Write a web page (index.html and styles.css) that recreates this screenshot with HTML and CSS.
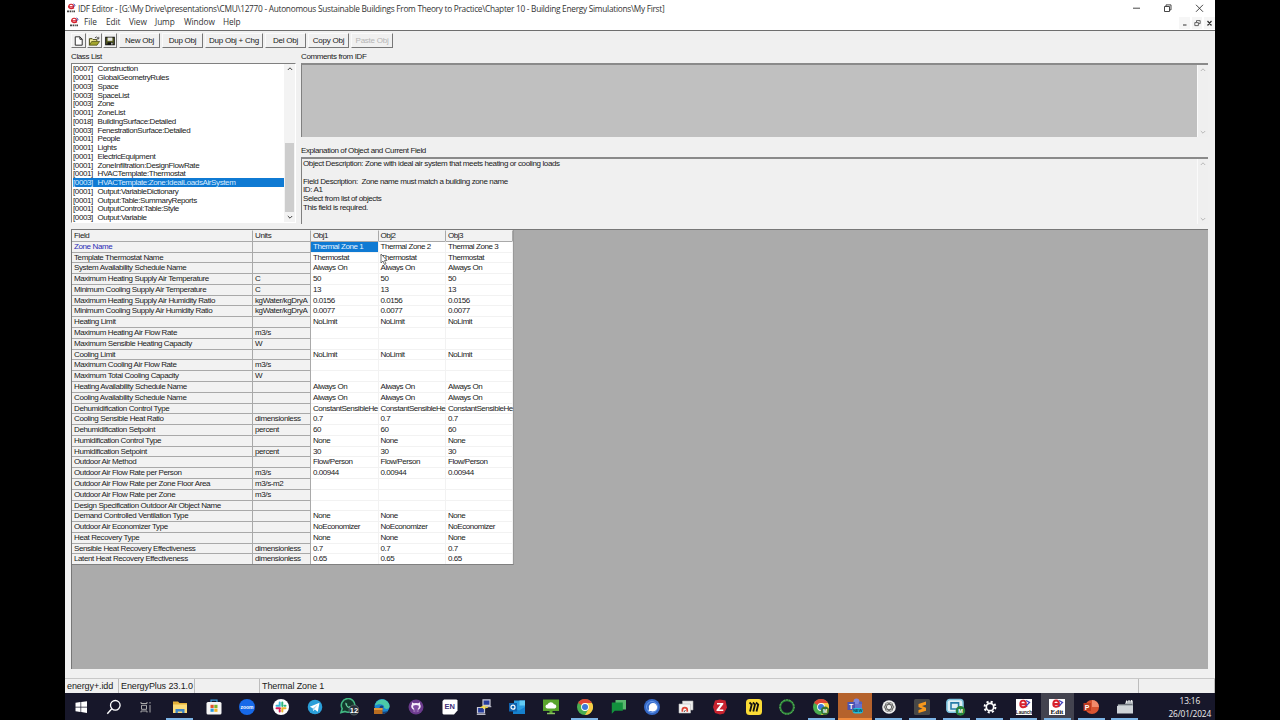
FILE: index.html
```html
<!DOCTYPE html>
<html lang="en">
    <head>
        <meta charset="utf-8">
        <title>IDF Editor</title>
        <meta name="viewport" content="width=device-width, initial-scale=1">
        <link rel="stylesheet" href="styles.css">
    </head>
    <body>
        <div class="screen">
            <header class="titlebar">
                <svg class="app-icon" viewBox="0 0 10 10"><path d="M2 3.800h5.500C7.500.6 3 .4 2.800 3.400S6.400 6 8 4.800" fill="none" stroke="#d3202c" stroke-width="1.2"/><path d="M7.500 1l1.600 1.3L7.500 4" fill="none" stroke="#3a3aa8" stroke-width="1"/><path d="M1 8.4h2M3.600 8.4h1.600M5.800 8.400h1M7.400 8.4h1.600" stroke="#444" stroke-width="1.7"/></svg>
                <span class="title-text">IDF Editor - [G:\My Drive\presentations\CMU\12770 - Autonomous Sustainable Buildings From Theory to Practice\Chapter 10 - Building Energy Simulations\My First]</span>
                <svg class="win-buttons" viewBox="0 0 72 10"><path d="M1 5.2h7M32.5 3.5h5v5h-5zM34 3.3V1.9h5v5h-1.400M64 1.800l7 7M71 1.800l-7 7" fill="none" stroke="#333" stroke-width=".9"/></svg>
            </header>
            <nav class="menubar">
                <svg class="app-icon" viewBox="0 0 10 10"><path d="M2 3.800h5.500C7.500.6 3 .4 2.800 3.400S6.400 6 8 4.800" fill="none" stroke="#d3202c" stroke-width="1.2"/><path d="M7.500 1l1.600 1.3L7.500 4" fill="none" stroke="#3a3aa8" stroke-width="1"/><path d="M1 8.4h2M3.600 8.4h1.600M5.800 8.400h1M7.400 8.4h1.600" stroke="#444" stroke-width="1.7"/></svg>
                <span class="m1">File</span><span class="m2">Edit</span><span class="m3">View</span><span class="m4">Jump</span><span class="m5">Window</span><span class="m6">Help</span>
                <svg class="mdi-buttons" viewBox="0 0 36 12"><path d="M0 0h11v12H0zM13 0h10v12H13zM25 0h11v12H25z" fill="#f6f6f6"/><path d="M4 8h3.500M28.500 4l4 4.500M32.500 4l-4 4.500" stroke="#333" stroke-width="1.200"/><path d="M15.800 5.600h3.600v3h-3.600zM17.500 5.300V3.600h3.700v3h-1.500" fill="none" stroke="#444" stroke-width=".8"/></svg>
            </nav>
            <div class="toolbar">
                <button class="tool b-new"><svg viewBox="0 0 14 12"><path d="M3.500 1.500h5l2.500 2.500v6.500h-7.500zM8.500 1.500v2.600h2.500" fill="#fff" stroke="#222"/></svg></button>
                <button class="tool b-open"><svg viewBox="0 0 14 12"><path d="M1.500 10.500v-7h3l1 1h4v1.800" fill="#f3ec9a" stroke="#3d3d0a"/><path d="M1.500 10.500l2.500-4h8.500l-2.800 4z" fill="#a3a52c" stroke="#4a4c12" stroke-width=".8"/><path d="M7.500 2.500q2-2 3.500.8M11.600 1.500v2.200H9.500" fill="none" stroke="#222" stroke-width=".8"/></svg></button>
                <button class="tool b-save"><svg viewBox="0 0 14 12"><path d="M2 1.500h10v9H2z" fill="#5d6325" stroke="#111" stroke-width="1.200"/><path d="M4.200 2h5.600v3.800H4.200z" fill="#e6e6e6"/><path d="M4 7.500h6.500v3H4z" fill="#111"/><path d="M8.500 8h1.400v2H8.500z" fill="#eee"/></svg></button>
                <button class="tool b-a">New Obj</button>
                <button class="tool b-b">Dup Obj</button>
                <button class="tool b-c">Dup Obj + Chg</button>
                <button class="tool b-d">Del Obj</button>
                <button class="tool b-e">Copy Obj</button>
                <button class="tool b-f" disabled>Paste Obj</button>
            </div>
            <main class="panes">
                <section class="class-pane">
                    <h3>Class List</h3>
                    <div class="class-box">
                        <div class="class-list" id="classList"></div>
                        <div class="scroll">
                            <svg viewBox="0 0 8 6"><path d="M1.800 4L4 1.800 6.200 4" /></svg>
                            <div class="thumb"></div>
                            <svg viewBox="0 0 8 6"><path d="M1.800 2L4 4.200 6.200 2" /></svg>
                        </div>
                    </div>
                </section>
                <section class="info-pane">
                    <h3>Comments from IDF</h3>
                    <div class="box comments">
                        <div class="fill"></div>
                        <div class="scroll off">
                            <svg viewBox="0 0 8 6"><path d="M1.800 4L4 1.800 6.200 4" /></svg>
                            <svg viewBox="0 0 8 6"><path d="M1.800 2L4 4.200 6.200 2" /></svg>
                        </div>
                    </div>
                    <h3 class="second">Explanation of Object and Current Field</h3>
                    <div class="box explain">
                        <div class="fill">
                            <p>Object Description: Zone with ideal air system that meets heating or cooling loads</p>
                            <p>&nbsp;</p>
                            <p>Field Description:&nbsp; Zone name must match a building zone name</p>
                            <p>ID: A1</p>
                            <p>Select from list of objects</p>
                            <p>This field is required.</p>
                        </div>
                        <div class="scroll off">
                            <svg viewBox="0 0 8 6"><path d="M1.800 4L4 1.800 6.200 4" /></svg>
                            <svg viewBox="0 0 8 6"><path d="M1.800 2L4 4.200 6.200 2" /></svg>
                        </div>
                    </div>
                </section>
            </main>
            <section class="grid-area">
                <div class="grid" id="grid"></div>
                <svg class="pointer" viewBox="0 0 8 13"><path d="M1 1v9l2-2 1.500 3.500 1.500-.7-1.500-3.300H7z" fill="#fff" stroke="#555" stroke-width=".8"/></svg>
            </section>
            <footer class="status">
                <span class="s1">energy+.idd</span><span class="s2">EnergyPlus 23.1.0</span><span class="s3"></span><span class="s4">Thermal Zone 1</span><span class="s5"></span>
            </footer>
            <div class="taskbar">
                <div class="starts">
                    <i><svg viewBox="0 0 16 16"><path d="M2.500 3.800l5-.7v4.600h-5zM8.200 3l5.800-.8v5.500H8.200zM2.500 8.400h5V13l-5-.7zM8.200 8.400H14v5.500l-5.800-.8z" fill="#fff"/></svg></i>
                    <i><svg viewBox="0 0 16 16"><circle cx="9.300" cy="6.300" r="4.800" fill="none" stroke="#fff" stroke-width="1.300"/><path d="M5.800 9.800L1.300 14.800" stroke="#fff" stroke-width="1.400"/></svg></i>
                    <i><svg viewBox="0 0 16 16"><path d="M3 3v1.500h6V3M3.500 6.300h5v4h-5zM3 13.500V12h6v1.500M12 3v1.500M12 6v7.500" fill="none" stroke="#aaa" stroke-width="1"/></svg></i>
                </div>
                <div class="tasks">
                    <i class="open"><svg viewBox="0 0 16 16"><path d="M1 2.500h5l1.500 1.500H15v10H1z" fill="#e4b13a"/><path d="M1 5.500h14V14H1z" fill="#fbdc79"/><path d="M3.500 14v-4h9v4h-2.300v-1.600H5.800V14z" fill="#3f87c9"/></svg></i>
                    <i><svg viewBox="0 0 16 16"><path d="M5 4V1.200h6V4" fill="none" stroke="#3a9bdc" stroke-width="1.200"/><rect y="3" x=".5" width="15" height="12.500" rx="1.500" fill="#f5f5f5"/><path d="M4.500 5.800h3.200V9H4.500z" fill="#e0532c"/><path d="M8.300 5.800h3.200V9H8.300z" fill="#7cb42c"/><path d="M4.500 9.600h3.200v3.200H4.500z" fill="#2a9bdc"/><path d="M8.300 9.600h3.200v3.200H8.300z" fill="#f2b424"/></svg></i>
                    <i><svg viewBox="0 0 16 16"><circle cx="8" cy="8" r="8" fill="#1769e8"/><text x="8" y="9.700" class="t-zoom">zoom</text></svg></i>
                    <i><svg viewBox="0 0 16 16"><circle cx="8" cy="8" r="8" fill="#fff"/><g fill="none" stroke-width="2" stroke-linecap="round"><path d="M6.700 3.500v3.300H3.500" stroke="#36b7d9"/><path d="M9.300 3.500V7M12.500 6.700h-1" stroke="#2eb67d"/><path d="M3.500 9.300H7M6.700 11v1.500" stroke="#d61b57"/><path d="M9.300 12.500V9.300h3.200" stroke="#ecb22e"/></g></svg></i>
                    <i><svg viewBox="0 0 16 16"><circle cx="8" cy="8" r="7.300" fill="#2b9fd9"/><path d="M2.800 7.800l9.700-4-1.700 9-3-2.200-1.700 1.500-.3-2.800z" fill="#fff"/><path d="M5.800 9.300l4.800-3.600-3.500 4.600-1 1.500z" fill="#a9d5ee"/></svg></i>
                    <i><svg viewBox="0 0 20 18" class="wide"><path d="M2 14.500l1.200-3.800A6.800 6.800 0 1 1 6 13.400z" fill="#14382c" stroke="#42b883" stroke-width="1.600"/><path d="M6.500 4.500c-1 2 2 6 4.800 6l1-1.500-1.800-1-1 .8L7.800 7l.7-1z" fill="#67cfa0"/><circle cx="15" cy="12" r="5" fill="#28303a" stroke="#677" stroke-width=".7"/><text x="15" y="14.600" class="t-badge">12</text></svg></i>
                    <i><svg viewBox="0 0 16 16"><circle cx="8" cy="7.500" r="7.500" fill="#1b86d1"/><path d="M1 6.500C2 1.500 7-.5 11 1s5.500 6.500 4 8-4.500 1-5-.5C11 6 7 3.500 1 6.500z" fill="#4cc9a7"/><path d="M9.500 8c-.5-2.500-4.500-2-4 1.500s4.500 4 8 2.500c-2 3.500-7 4-9.500 1z" fill="#18417c"/><path d="M0 9h8.500v6H0z" fill="#b96d20"/><path d="M0 9h8.500v2H0z" fill="#e09a3c"/></svg></i>
                    <i><svg viewBox="0 0 16 16"><circle cx="8" cy="8" r="7.500" fill="#6b3a8d"/><path d="M5.800 13v-2.300C2.800 9.500 2.800 6.500 4 5.300l-.1-2 2 .9q2.100-.5 4.200 0l2-.9-.1 2c1.200 1.200 1.200 4.200-1.800 5.400V13" fill="#f6ecfb"/><path d="M6.200 13.500V9.800C5 9 4.800 7.500 5.500 6.500q2.500-.8 5 0c.7 1 .5 2.500-.7 3.300v3.700z" fill="#7d4aa0"/></svg></i>
                    <i><svg viewBox="0 0 16 16"><path d="M2 .5h12.500l1 1v10L12 15.500H1.500l-1-1V2z" fill="#fff"/><text x="7.800" y="10.400" class="t-en">EN</text></svg></i>
                    <i><svg viewBox="0 0 16 16"><path d="M7 .8h7v5.500H7zM1.500 8.500h7V14h-7z" fill="#263d9c" stroke="#c9c9d6" stroke-width="1.200"/><path d="M6.500 7.600h8.800M.8 15.400h8.700" stroke="#b8b8c5" stroke-width="1.200"/><path d="M12 8L7.800 9.300l.8-2.100L4.500 8.700" fill="none" stroke="#f7dc42" stroke-width="1.300"/></svg></i>
                    <i><svg viewBox="0 0 16 16"><path d="M5 1.500h11v12H5z" fill="#2c9de0"/><path d="M10.500 1.500H16v5h-5.500z" fill="#62cbf4"/><path d="M4 8l6 3.500L16 8v7H4z" fill="#1681ce"/><path d="M0 4h8v8.500H0z" fill="#0f61ad"/><circle cx="4" cy="8.200" r="2" fill="none" stroke="#fff" stroke-width="1.200"/></svg></i>
                    <i><svg viewBox="0 0 16 16"><path d="M0 .5h16v11.500H0zM6.500 12h3v2h-3z" fill="#59a42c"/><path d="M4 14.500h8" stroke="#89c360" stroke-width="1.500"/><path d="M4.500 9.500a2 2 0 0 1 0-4 3.500 3.500 0 0 1 6.500-.3 2.200 2.200 0 0 1 .8 4.300z" fill="#fff"/></svg></i>
                    <i class="open"><svg viewBox="0 0 16 16"><circle cx="8" cy="8" r="8" fill="#4aae50"/><path d="M8 8L1.070 4A8 8 0 0 1 14.930 4z" fill="#df4535"/><path d="M8 8V4h6.930A8 8 0 0 1 8 16l3.500-6z" fill="#f8cc45"/><circle cx="8" cy="8" r="3.900" fill="#fff"/><circle cx="8" cy="8" r="3" fill="#3c78d8"/></svg></i>
                    <i><svg viewBox="0 0 16 16"><path d="M4.500 1H15v9.500H4.500z" fill="#5ab870"/><path d="M.8 3.500h11v8.300h-8L.8 14.800z" fill="#12913d"/></svg></i>
                    <i><svg viewBox="0 0 16 16"><circle cx="8" cy="8" r="8" fill="#3569c8"/><circle cx="8" cy="8" r="5.500" fill="none" stroke="#6b9cec"/><path d="M4.500 12.200l.5-2.500A4.200 4.200 0 1 1 7 12z" fill="#fff"/></svg></i>
                    <i><svg viewBox="0 0 16 16"><path d="M4.500 2H15v9H4.500z" fill="#eee" stroke="#aaa" stroke-width=".6"/><path d="M1 5h11.500v9H1z" fill="#f6f6f6" stroke="#bbb" stroke-width=".6"/><path d="M3.500 12.800V11a3.300 3.300 0 0 1 6.600 0v1.800H8.400V11a1.600 1.600 0 0 0-3.200 0v1.800z" fill="#df4535"/><path d="M6 13l1.500-2" stroke="#555"/></svg></i>
                    <i><svg viewBox="0 0 16 16"><path d="M3 1.500L8 .5l5.500 1 1.500 7-3 6-4 1-5-1.500-2-6z" fill="#c8232f"/><path d="M5 4h6.300v1.300L7.300 10.500h4V12H4.500v-1.300l4-5.200H5z" fill="#fff"/></svg></i>
                    <i><svg viewBox="0 0 16 16"><rect width="16" height="16" rx="3.500" fill="#fbdb36"/><path d="M3.500 3.500l2.200 2L4 12.500M6.800 3.500l2.200 2L7.300 12.500M10 3.500l2.200 2-1.700 7" fill="none" stroke="#111" stroke-width="1.800"/></svg></i>
                    <i><svg viewBox="0 0 16 16"><circle cx="8" cy="8" r="6.800" fill="none" stroke="#2d8c38" stroke-width="1.900"/><circle cx="8" cy="8" r="7.200" fill="none" stroke="#78bb73" stroke-width=".8" stroke-dasharray="1.500 1.500"/></svg></i>
                    <i class="open"><svg viewBox="0 0 16 16"><circle cx="8" cy="8" r="8" fill="#4aae50"/><path d="M8 8L1.070 4A8 8 0 0 1 14.930 4z" fill="#df4535"/><path d="M8 8V4h6.930A8 8 0 0 1 8 16l3.500-6z" fill="#f8cc45"/><circle cx="8" cy="8" r="3.900" fill="#fff"/><circle cx="8" cy="8" r="3" fill="#3c78d8"/><circle cx="12" cy="11.800" r="4.200" fill="#39752e"/><text x="12" y="13.700" class="t-m">M</text></svg></i>
                    <i class="alert"><svg viewBox="0 0 16 16"><circle cx="9.500" cy="3.500" r="3" fill="#7f87dd"/><circle cx="13.500" cy="5" r="1.800" fill="#5662bd"/><path d="M5 6h10v6l-4 3-5-2z" fill="#6770ce"/><path d="M.5 4h7.500v8H.5z" fill="#4a53b4"/><text x="4.200" y="10.500" class="t-t">T</text><rect x="5.500" y="10" width="10.500" height="5.500" rx="2.700" fill="#21bede"/><text x="10.800" y="14.300" class="t-new">NEW</text></svg></i>
                    <i class="open"><svg viewBox="0 0 16 16"><circle cx="8" cy="8" r="6.800" fill="#eee"/><g fill="none" stroke="#555" stroke-width=".8"><ellipse cx="8" cy="8" rx="4.800" ry="2.500"/><ellipse cx="8" cy="8" rx="4.800" ry="2.500" transform="rotate(60 8 8)"/><ellipse cx="8" cy="8" rx="4.800" ry="2.500" transform="rotate(120 8 8)"/></g></svg></i>
                    <i class="open"><svg viewBox="0 0 16 16"><rect width="16" height="16" rx="1.500" fill="#474747"/><path d="M12 2.500v3.200L8 7l4 1.700v3L4.500 14v-3L8.500 9.700l-4-1.700V5z" fill="#f7981d"/></svg></i>
                    <i class="open"><svg viewBox="0 0 18 16" class="wide"><rect x=".8" y="1.300" width="14.500" height="11.500" rx="2.500" fill="#dff0f5" stroke="#7cc4df" stroke-width="1.400"/><path d="M4.500 4.300h6.800v5.500H4.500z" fill="none" stroke="#267ca8" stroke-width="1.400"/><circle cx="13" cy="11.500" r="4.300" fill="#27823a"/><text x="13" y="13.500" class="t-m">M</text></svg></i>
                    <i class="open"><svg viewBox="0 0 16 16"><circle cx="8" cy="8" r="3.700" fill="none" stroke="#fff" stroke-width="1.700"/><circle cx="8" cy="8" r="5.400" fill="none" stroke="#fff" stroke-width="2" stroke-dasharray="2.120 2.120"/></svg></i>
                    <i class="open"><svg viewBox="0 0 16 16"><path d="M0 0h16v16H0z" fill="#fff"/><path d="M4 5.300h6C10 .5 4.600.5 4.300 4.800S8.500 9 11 6.500" fill="none" stroke="#d8212d" stroke-width="1.900"/><path d="M10 1.500l3.500 2L10 7" fill="none" stroke="#44b" stroke-width="1.300"/><text x="8" y="14.800" class="t-launch">Launch</text></svg></i>
                    <i class="open active"><svg viewBox="0 0 16 16"><path d="M0 0h16v16H0z" fill="#fff"/><path d="M4 5h6C10 .5 4.600.5 4.300 4.500S8.500 8.500 11 6" fill="none" stroke="#d8212d" stroke-width="1.900"/><path d="M10 1.500l3.500 2L10 7" fill="none" stroke="#44b" stroke-width="1.300"/><text x="8" y="15" class="t-edit">Edit</text></svg></i>
                    <i class="open"><svg viewBox="0 0 16 16"><circle cx="9" cy="8" r="7" fill="#d95431"/><path d="M9 1a7 7 0 0 1 7 7H9z" fill="#f28b6c"/><path d="M.5 4h7.500v8H.5z" fill="#bd3b20"/><text x="4.200" y="10.500" class="t-t">P</text></svg></i>
                    <i class="open"><svg viewBox="0 0 16 16"><path d="M1 5h7l1-3 7-.5V14H0z" fill="#aeb4ba"/><path d="M9.500 4V1.500M12 3.500V1M14.500 3.500V1" stroke="#eee"/><path d="M0 7h16v7.500H0z" fill="#cfd4d8"/><path d="M1 5.500h14.500" stroke="#6f767c"/></svg></i>
                </div>
                <div class="clock"><span>13:16</span><span class="date">26/01/2024</span></div>
            </div>
        </div>
        <script>
            var classes = [
                ["0007", "Construction"], ["0001", "GlobalGeometryRules"], ["0003", "Space"],
                ["0003", "SpaceList"], ["0003", "Zone"], ["0001", "ZoneList"],
                ["0018", "BuildingSurface:Detailed"], ["0003", "FenestrationSurface:Detailed"],
                ["0001", "People"], ["0001", "Lights"], ["0001", "ElectricEquipment"],
                ["0001", "ZoneInfiltration:DesignFlowRate"], ["0001", "HVACTemplate:Thermostat"],
                ["0003", "HVACTemplate:Zone:IdealLoadsAirSystem"], ["0001", "Output:VariableDictionary"],
                ["0001", "Output:Table:SummaryReports"], ["0001", "OutputControl:Table:Style"],
                ["0003", "Output:Variable"]
            ];
            var html = "";
            for (var i = 0; i < classes.length; i++) {
                html += `<div class="item${i == 13 ? " selected" : ""}"><span>[${classes[i][0]}]</span><span>${classes[i][1]}</span></div>`;
            }
            document.getElementById("classList").innerHTML = html;

            // field name, units, value (same in all three objects)
            var fields = [
                ["Template Thermostat Name", "", "Thermostat"],
                ["System Availability Schedule Name", "", "Always On"],
                ["Maximum Heating Supply Air Temperature", "C", "50"],
                ["Minimum Cooling Supply Air Temperature", "C", "13"],
                ["Maximum Heating Supply Air Humidity Ratio", "kgWater/kgDryA", "0.0156"],
                ["Minimum Cooling Supply Air Humidity Ratio", "kgWater/kgDryA", "0.0077"],
                ["Heating Limit", "", "NoLimit"],
                ["Maximum Heating Air Flow Rate", "m3/s", ""],
                ["Maximum Sensible Heating Capacity", "W", ""],
                ["Cooling Limit", "", "NoLimit"],
                ["Maximum Cooling Air Flow Rate", "m3/s", ""],
                ["Maximum Total Cooling Capacity", "W", ""],
                ["Heating Availability Schedule Name", "", "Always On"],
                ["Cooling Availability Schedule Name", "", "Always On"],
                ["Dehumidification Control Type", "", "ConstantSensibleHe"],
                ["Cooling Sensible Heat Ratio", "dimensionless", "0.7"],
                ["Dehumidification Setpoint", "percent", "60"],
                ["Humidification Control Type", "", "None"],
                ["Humidification Setpoint", "percent", "30"],
                ["Outdoor Air Method", "", "Flow/Person"],
                ["Outdoor Air Flow Rate per Person", "m3/s", "0.00944"],
                ["Outdoor Air Flow Rate per Zone Floor Area", "m3/s-m2", ""],
                ["Outdoor Air Flow Rate per Zone", "m3/s", ""],
                ["Design Specification Outdoor Air Object Name", "", ""],
                ["Demand Controlled Ventilation Type", "", "None"],
                ["Outdoor Air Economizer Type", "", "NoEconomizer"],
                ["Heat Recovery Type", "", "None"],
                ["Sensible Heat Recovery Effectiveness", "dimensionless", "0.7"],
                ["Latent Heat Recovery Effectiveness", "dimensionless", "0.65"]
            ];
            function row(cells, cls) {
                return `<div class="row ${cls}">` + cells.map(c => `<div class="cell">${c}</div>`).join("") + "</div>";
            }
            html = row(["Field", "Units", "Obj1", "Obj2", "Obj3"], "head");
            html += row(["Zone Name", "", "Thermal Zone 1", "Thermal Zone 2", "Thermal Zone 3"], "current");
            for (var j = 0; j < fields.length; j++) {
                var f = fields[j];
                html += row([f[0], f[1], f[2], f[2], f[2]], "");
            }
            document.getElementById("grid").innerHTML = html;
        </script>
    </body>
</html>
```

FILE: styles.css
```css
body{
    margin: 0;
    background-color: #000;
    color: #1a1a1a;
    font-family: "Liberation Sans", Arial, sans-serif;
    font-size: 8px;
    letter-spacing: -0.39px;
    overflow: hidden;
}
.screen{
    box-sizing: border-box;
    width: 1150px;
    height: 720px;
    margin-left: 65px;
    display: flex;
    flex-direction: column;
    background-color: #f0f0f0;
}
.titlebar, .menubar{
    display: flex;
    align-items: center;
    background-color: #fff;
    font-family: "Open Sans", sans-serif;
    white-space: nowrap;
    color: #333;
}
.titlebar{
    height: 16px;
    line-height: 15px;
    font-size: 8.3px;
    letter-spacing: -0.275px;
}
.menubar{
    box-sizing: border-box;
    height: 15px;
    border-bottom: 1px solid #6e6e6e;
    font-size: 8.3px;
    letter-spacing: -0.1px;
}
.menubar span{
    padding-bottom: 3px;
}
.app-icon{
    width: 10px;
    height: 10px;
    margin-left: 1px;
}
.menubar .app-icon{
    margin-left: 4px;
    margin-bottom: 2px;
}
.title-text{
    margin-left: 2px;
}
.win-buttons{
    width: 72px;
    height: 10px;
    margin-left: auto;
    margin-right: 11px;
}
.m1{ margin-left: 5px; width: 22px; }
.m2{ width: 23px; }
.m3{ width: 26px; }
.m4{ width: 29px; }
.m5{ width: 39px; }
.mdi-buttons{
    width: 36px;
    height: 12px;
    margin-left: auto;
    margin-right: 0;
}

/* toolbar */
.toolbar{
    display: flex;
    height: 15px;
    padding: 2px 0 0 6px;
}
.tool{
    box-sizing: border-box;
    display: flex;
    align-items: center;
    justify-content: center;
    padding: 0;
    margin-right: 2px;
    border: 1px solid #fafafa;
    border-right-color: #777;
    border-bottom-color: #777;
    background-color: #f0f0f0;
    color: #1a1a1a;
    font: 8px "Liberation Sans", Arial, sans-serif;
    letter-spacing: -0.25px;
    white-space: nowrap;
}
.tool svg{
    width: 14px;
    height: 12px;
}
.tool:disabled{
    color: #b5b5b5;
}
.b-new, .b-open{
    width: 15px;
    margin-right: 1px;
}
.b-save{
    width: 14px;
}
.b-a{ width: 41px; }
.b-b{ width: 41px; }
.b-c{ width: 58px; }
.b-d{ width: 41px; }
.b-e{ width: 41px; }
.b-f{ width: 42px; }

/* upper panes */
.panes{
    display: flex;
    height: 181px;
    padding-left: 6px;
}
h3{
    margin: 0;
    padding-top: 4px;
    height: 11px;
    line-height: 10px;
    font-size: 8px;
    font-weight: normal;
}
.class-pane{
    width: 226px;
    margin-right: 4px;
}
.class-box{
    box-sizing: border-box;
    display: flex;
    width: 225px;
    height: 160px;
    border: 1px solid #fff;
    border-top-color: #808080;
    border-left-color: #808080;
    background-color: #fff;
}
.class-list{
    width: 213px;
    overflow: hidden;
    padding-left: 1px;
    padding-top: 0.4px;
}
.item{
    display: flex;
    height: 8.765px;
    line-height: 9px;
    white-space: pre;
}
.item span:first-child{
    width: 24.500px;
}
.item.selected{
    background-color: #0f7ad3;
    color: #d9ecff;
}
.scroll{
    display: flex;
    flex-direction: column;
    justify-content: space-between;
    align-items: center;
    width: 11px;
    background-color: #f3f3f3;
    padding: 2px 0;
    box-sizing: border-box;
}
.scroll svg{
    width: 8px;
    height: 6px;
    fill: none;
    stroke: #444;
}
.scroll.off svg{
    stroke: #b9b9b9;
}
.thumb{
    width: 9px;
    height: 69px;
    margin-top: auto;
    margin-bottom: 2px;
    background-color: #cdcdcd;
}
.info-pane{
    width: 907px;
}
.box{
    box-sizing: border-box;
    display: flex;
    border-top: 2px solid #8a8a8a;
    border-left: 1px solid #808080;
}
.box .fill{
    flex: 1;
}
.box .scroll{
    border-left: 1px solid #fafafa;
    background-color: #efefef;
}
.comments{
    height: 74px;
}
.comments .fill{
    background-color: #c0c0c0;
}
h3.second{
    padding-top: 9px;
    height: 11px;
}
.explain{
    height: 67px;
}
.explain p{
    margin: 0 0 0 1px;
    height: 8.800px;
    line-height: 9px;
    white-space: nowrap;
}

/* field grid */
.grid-area{
    position: relative;
    box-sizing: border-box;
    width: 1137px;
    height: 440px;
    margin-left: 6px;
    border-top: 1px solid #777;
    border-left: 1px solid #777;
    background-color: #ababab;
}
.grid{
    width: 441px;
    border-bottom: 1px solid #808080;
    border-right: 1px solid #999;
}
.row{
    display: grid;
    grid-template-columns: 181px 58px 67.500px 67.500px 67px;
    height: 10.790px;
    line-height: 10px;
}
.cell{
    box-sizing: border-box;
    white-space: nowrap;
    padding-left: 2px;
    border-right: 1px solid #f2f2f2;
    border-top: 1px solid #f2f2f2;
    background-color: #fff;
}
.cell:nth-child(n+3){
    letter-spacing: -0.45px;
}
.cell:nth-child(-n+2), .head .cell{
    background-color: #f2f2f2;
    border-color: #a9a9a9;
}
.head .cell{
    border-top-color: #f2f2f2;
}
.current .cell{
    border-top-color: #a9a9a9;
}
.current .cell:first-child{
    color: #2b2bb5;
}
.current .cell:nth-child(3){
    background-color: #0f7ad3;
    color: #e6f3ff;
}
.pointer{
    position: absolute;
    left: 308px;
    top: 23px;
    width: 8px;
    height: 13px;
}

/* status bar */
.status{
    display: flex;
    height: 14px;
    margin-top: 9px;
    border-top: 1px solid #c8c8c8;
    line-height: 15px;
    font-size: 9px;
    letter-spacing: -0.1px;
}
.status span{
    box-sizing: border-box;
    padding-left: 2px;
    border-right: 1px solid #bdbdbd;
    white-space: nowrap;
}
.s1{ width: 54px; }
.s2{ width: 76px; }
.s3{ width: 65px; }
.s4{ width: 879px; }
.s5{ flex: 1; }

/* taskbar */
.taskbar{
    display: flex;
    flex: 1;
    background-color: #17172a;
}
.taskbar i{
    display: flex;
    align-items: center;
    justify-content: center;
    box-sizing: border-box;
    font-style: normal;
}
.starts{
    display: grid;
    grid-template-columns: repeat(3, 32.500px);
    width: 98px;
}
.tasks{
    display: grid;
    grid-template-columns: repeat(29, 33.750px);
    width: 979px;
}
.taskbar svg{
    width: 16px;
    height: 16px;
}
.taskbar svg.wide{
    width: 20px;
    height: 18px;
}
.taskbar .open{
    background: linear-gradient(#7db5e6, #7db5e6) center bottom / 27px 2px no-repeat;
}
.taskbar .active{
    background-color: #43434f;
}
.taskbar .alert{
    background-color: #b5622c;
    border-bottom: 2px solid #f08a3c;
}
.clock{
    display: flex;
    flex-direction: column;
    align-items: flex-end;
    flex: 1;
    padding: 2px 4px 0 0;
    line-height: 12.500px;
    font-family: "Open Sans", sans-serif;
    font-size: 8.300px;
    letter-spacing: -0.15px;
    color: #eee;
}
.clock span:first-child{
    padding-right: 11px;
}
.taskbar text{
    text-anchor: middle;
    font-family: "Liberation Sans", Arial, sans-serif;
    font-weight: bold;
    letter-spacing: 0;
    fill: #fff;
}
.taskbar .t-zoom{ font-size: 5px; }
.taskbar .t-badge{ font-size: 7.500px; }
.taskbar .t-en{ font-size: 7.500px; fill: #3d2f7a; }
.taskbar .t-m{ font-size: 5px; }
.taskbar .t-t{ font-size: 7px; }
.taskbar .t-new{ font-size: 4px; fill: #083a4a; }
.taskbar .t-launch{ font-size: 4.600px; fill: #222; }
.taskbar .t-edit{ font-size: 7px; font-family: "Liberation Serif", serif; fill: #111; }
```
